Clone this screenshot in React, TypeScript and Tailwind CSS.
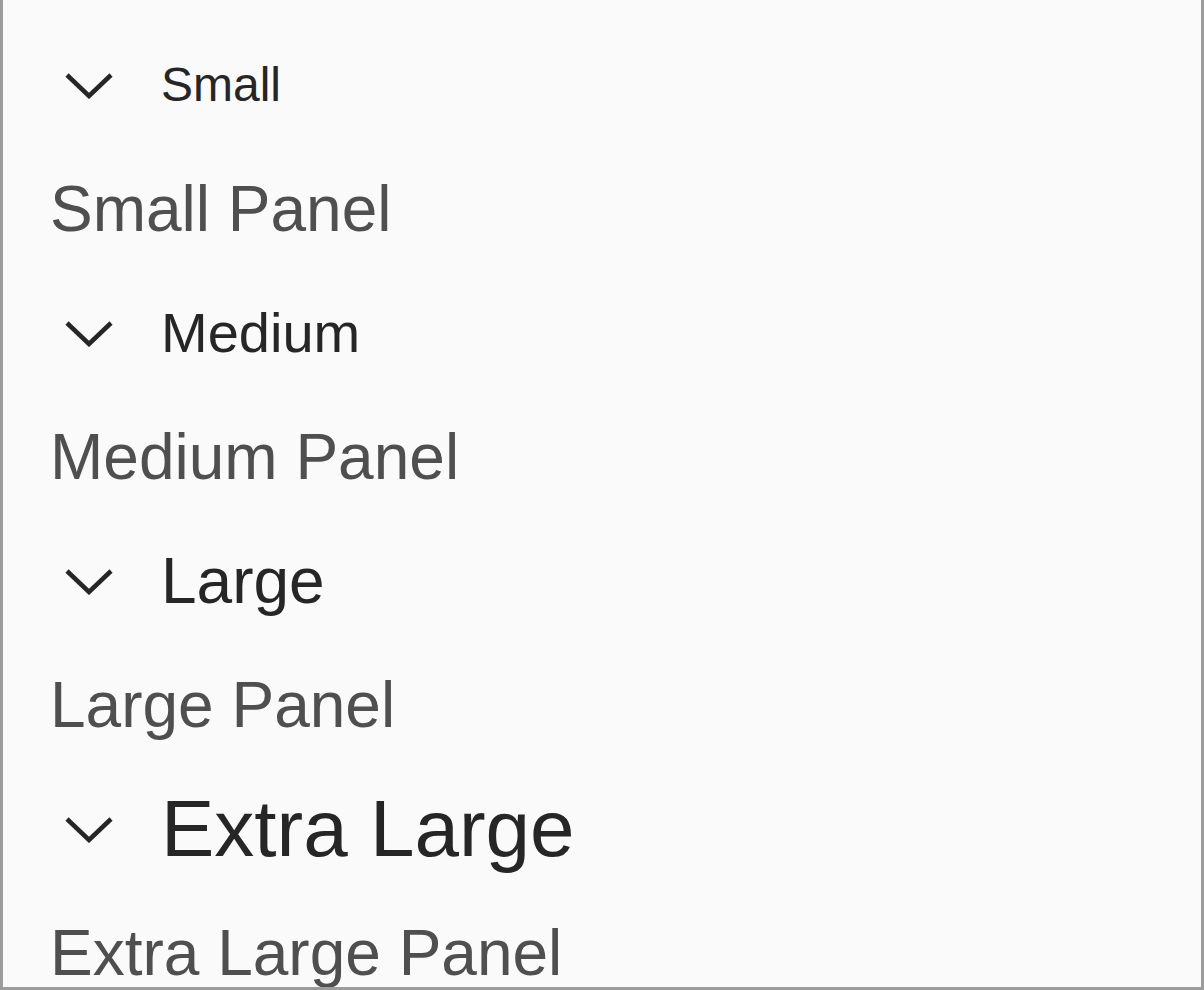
const sections = [
  { title: 'Small', size: 'text-[48px]', panel: 'Small Panel' },
  { title: 'Medium', size: 'text-[56px]', panel: 'Medium Panel' },
  { title: 'Large', size: 'text-[64px]', panel: 'Large Panel' },
  { title: 'Extra Large', size: 'text-[80px]', panel: 'Extra Large Panel' },
];

function Chevron() {
  return (
    <svg width="48" height="28" viewBox="0 0 48 28" fill="none" className="shrink-0">
      <path d="M2 4 L24 25 L46 4" stroke="#262626" strokeWidth="4.5" strokeLinejoin="miter" />
    </svg>
  );
}

export default function App() {
  return (
    <div
      className="w-[1204px] h-[990px] overflow-hidden bg-[#fafafa] border-l-[3px] border-r-[3px] border-b-[3px] border-[#9c9c9c] pt-[24px]"
      style={{ fontFamily: '"Liberation Sans", Arial, sans-serif' }}
    >
      {sections.map((s) => (
        <div key={s.title}>
          <div className="h-[122px] flex items-center pl-[62px] gap-[48px]">
            <Chevron />
            <span className={`${s.size} leading-none text-[#262626]`}>{s.title}</span>
          </div>
          <div className="h-[126px] flex items-center pl-[47px]">
            <span className="text-[64px] leading-none text-[#4f4f4f]">{s.panel}</span>
          </div>
        </div>
      ))}
    </div>
  );
}
